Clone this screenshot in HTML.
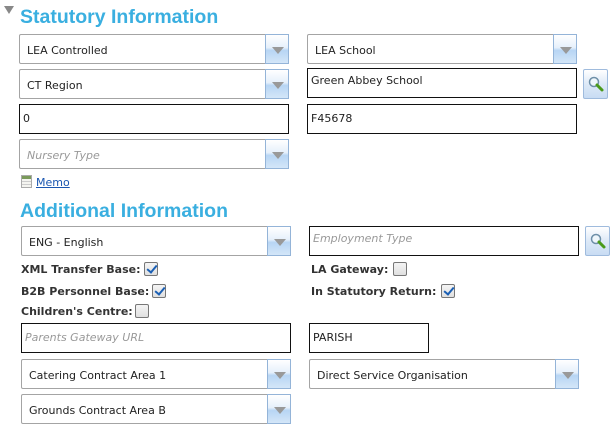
<!DOCTYPE html>
<html><head><meta charset="utf-8"><style>
*{box-sizing:border-box}
body{margin:0;width:613px;height:428px;background:#fff;font-family:"DejaVu Sans","Liberation Sans",sans-serif;font-size:11px;color:#222;position:relative;overflow:hidden}
.a{position:absolute}
h1{position:absolute;margin:0;font-family:"Liberation Sans",sans-serif;font-weight:bold;font-size:19.5px;color:#3aafe0;left:20px}
.dd{position:absolute;height:30px;border:1px solid #a4a4a4;background:#fff;border-radius:2px}
.dd span{position:absolute;left:7px;top:9px;white-space:nowrap}
.dd .b{position:absolute;right:-1px;top:-1px;width:24px;height:30px;border:1px solid #94b4d8;background:linear-gradient(#fff 0%,#e6f0fb 45%,#b7d5f4 55%,#d4e6f8 100%)}
.dd .b:after{content:"";position:absolute;left:6px;top:12px;border-left:6px solid transparent;border-right:6px solid transparent;border-top:7px solid #999}
.in{position:absolute;height:30px;border:1px solid #111;background:#fff}
.in span{position:absolute;left:3px;top:7px;white-space:nowrap}
.ph{color:#999;font-style:italic}
.sb{position:absolute;width:25px;height:30px;border:1px solid #9fbbdd;border-radius:2px;background:linear-gradient(#fff,#dde9f7 50%,#c8dcf3)}
.lb{position:absolute;font-weight:bold;color:#333;white-space:nowrap}
.cb{position:absolute;width:14px;height:14px;border:1px solid #777;border-radius:2px;background:linear-gradient(#f4f4f4,#e0e0e0)}
.cb.c:after{content:"";position:absolute;left:4px;top:0px;width:4px;height:8px;border-right:2px solid #1a5fb4;border-bottom:2px solid #1a5fb4;transform:rotate(40deg)}
</style></head><body>
<div class="a" style="left:4px;top:6px;border-left:5px solid transparent;border-right:5px solid transparent;border-top:8px solid #888"></div>
<h1 style="top:6px">Statutory Information</h1>

<div class="dd" style="left:19px;top:34px;width:270px"><span>LEA Controlled</span><div class="b"></div></div>
<div class="dd" style="left:307px;top:34px;width:270px"><span>LEA School</span><div class="b"></div></div>
<div class="dd" style="left:19px;top:69px;width:270px"><span>CT Region</span><div class="b"></div></div>
<div class="in" style="left:307px;top:68px;width:270px"><span style="top:5px">Green Abbey School</span></div>
<div class="sb" style="left:583px;top:69px"><svg width="23" height="28" viewBox="0 0 23 28"><circle cx="10" cy="12" r="4.5" fill="#eef6fb" stroke="#6e8fa8" stroke-width="1.5"/><path d="M13 15l5 5" stroke="#4a9a1a" stroke-width="3" stroke-linecap="round"/></svg></div>
<div class="in" style="left:19px;top:104px;width:270px"><span>0</span></div>
<div class="in" style="left:307px;top:104px;width:270px"><span>F45678</span></div>
<div class="dd" style="left:19px;top:139px;width:270px"><span class="ph">Nursery Type</span><div class="b"></div></div>
<div class="a" style="left:21px;top:175px;width:11px;height:13px;border:1px solid #aaa;background:repeating-linear-gradient(#f4f4f0 0 2px,#ccc 2px 3px)"><div style="height:3px;background:#7a9a5a"></div></div>
<div class="a" style="left:36px;top:176px;color:#1a56b0;text-decoration:underline">Memo</div>

<h1 style="top:200px">Additional Information</h1>
<div class="dd" style="left:21px;top:226px;width:270px"><span>ENG - English</span><div class="b"></div></div>
<div class="in" style="left:309px;top:226px;width:270px"><span class="ph" style="top:5px">Employment Type</span></div>
<div class="sb" style="left:585px;top:226px"><svg width="23" height="28" viewBox="0 0 23 28"><circle cx="10" cy="12" r="4.5" fill="#eef6fb" stroke="#6e8fa8" stroke-width="1.5"/><path d="M13 15l5 5" stroke="#4a9a1a" stroke-width="3" stroke-linecap="round"/></svg></div>

<div class="lb" style="left:21px;top:263px">XML Transfer Base:</div><div class="cb c" style="left:144px;top:262px"></div>
<div class="lb" style="left:21px;top:285px">B2B Personnel Base:</div><div class="cb c" style="left:152px;top:284px"></div>
<div class="lb" style="left:21px;top:305px">Children's Centre:</div><div class="cb" style="left:135px;top:304px"></div>
<div class="lb" style="left:311px;top:263px">LA Gateway:</div><div class="cb" style="left:393px;top:262px"></div>
<div class="lb" style="left:311px;top:285px">In Statutory Return:</div><div class="cb c" style="left:441px;top:284px"></div>

<div class="in" style="left:21px;top:323px;width:270px"><span class="ph">Parents Gateway URL</span></div>
<div class="in" style="left:309px;top:323px;width:120px"><span>PARISH</span></div>
<div class="dd" style="left:21px;top:359px;width:270px"><span>Catering Contract Area 1</span><div class="b"></div></div>
<div class="dd" style="left:309px;top:359px;width:270px"><span>Direct Service Organisation</span><div class="b"></div></div>
<div class="dd" style="left:21px;top:394px;width:270px"><span>Grounds Contract Area B</span><div class="b"></div></div>
</body></html>
